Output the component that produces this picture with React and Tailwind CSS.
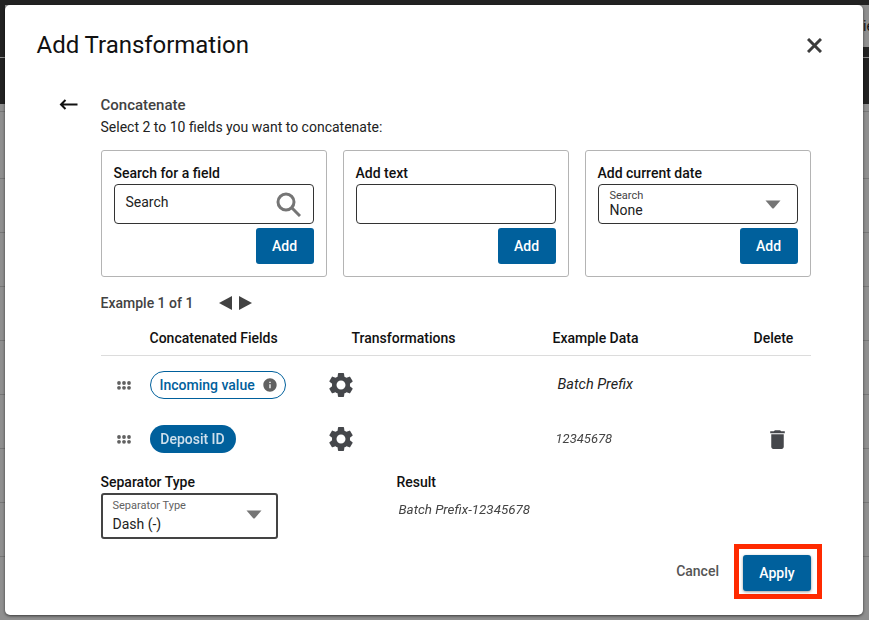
import React from "react";
import { MdSettings, MdDelete, MdInfo } from "react-icons/md";

function Caret() {
  return (
    <svg width="16" height="9" viewBox="0 0 16 9" className="shrink-0">
      <path d="M0.5 0.5 H15.5 L9 8 Q8 9 7 8 Z" fill="#757575" />
    </svg>
  );
}

function Dots() {
  return (
    <svg width="14" height="9" viewBox="0 0 14 9" className="shrink-0">
      {[2, 7, 12].map((x) =>
        [2, 6.8].map((y) => <circle key={`${x}-${y}`} cx={x} cy={y} r="1.9" fill="#616161" />)
      )}
    </svg>
  );
}

function AddButton() {
  return (
    <div className="flex justify-end mt-[4px]">
      <button className="w-[58px] h-[36px] rounded-[3px] bg-[#00609c] text-white text-[14px] font-medium">Add</button>
    </div>
  );
}

function Card({ title, children }) {
  return (
    <div className="w-[226px] h-[127px] rounded-[3px] border border-[#b4b4b4] px-[12px] pt-[14px]">
      <div className="text-[14px] leading-[17px] font-medium text-[#111] mb-[2px] whitespace-nowrap">{title}</div>
      {children}
      <AddButton />
    </div>
  );
}

function Backdrop() {
  const rows = [67, 54, 54, 54, 54, 54, 54, 54, 54];
  return (
    <div className="w-[869px] h-[620px] overflow-hidden bg-[#8f8f8f]">
      <div className="h-[5px] bg-[#222222]" />
      <div className="h-[42px] flex justify-between bg-[#8f8f8f]">
        <div className="w-[5px] bg-[#222222]" />
        <div className="w-[6px] overflow-hidden text-[14px] leading-[42px] text-[#111] font-['Roboto',sans-serif]">ie</div>
      </div>
      <div className="h-[10px] bg-[#222222]" />
      <div className="h-[1px] bg-[#8a8a8a]" />
      <div className="h-[46px] bg-[#222222]" />
      <div className="h-[7px] bg-[#8f8f8f]" />
      {rows.map((h, i) => (
        <div key={i} className="border-t border-[#777777] bg-[#8f8f8f]" style={{ height: h }} />
      ))}
    </div>
  );
}

export default function App() {
  return (
    <div className="relative w-[869px] h-[620px] overflow-hidden font-['Roboto',sans-serif]">
      <Backdrop />
      <div className="absolute left-[5px] top-[5px] w-[858px] h-[610px] rounded-[5px] bg-white shadow-[0_1px_3px_rgba(0,0,0,0.6)] flex flex-col">
        <div className="h-[80px] pl-[32px] pr-[41px] flex items-center justify-between shrink-0">
          <h1 className="text-[24px] leading-[32px] text-[#111] -ml-[0.5px] tracking-[-0.03px]">Add Transformation</h1>
          <svg width="15" height="15" viewBox="0 0 15 15">
            <path d="M1 1 L14 14 M14 1 L1 14" fill="none" stroke="#3c3c3c" strokeWidth="3" />
          </svg>
        </div>
        <div className="flex pl-[54px] shrink-0">
          <div className="w-[42px] pt-[14px]">
            <svg width="19" height="11" viewBox="0 0 19 11">
              <path d="M18.5 5.5 H2 M6.5 1 L2 5.5 L6.5 10" fill="none" stroke="#111" strokeWidth="2" />
            </svg>
          </div>
          <div className="w-[710px] pt-[10px] -ml-[0.5px]">
            <div className="text-[15px] leading-[20px] font-medium text-[#424242]">Concatenate</div>
            <div className="text-[14px] leading-[20px] mt-[2px] text-[#222]">Select 2 to 10 fields you want to concatenate:</div>
            <div className="flex gap-[16px] mt-[13px]">
              <Card title="Search for a field">
                <div className="h-[40px] rounded-[4px] border border-[#333] pl-[11px] pr-[12px] flex items-center justify-between">
                  <span className="text-[14px] text-[#222] -mt-[3px]">Search</span>
                  <svg width="25" height="25" viewBox="0 0 25 25" fill="none" stroke="#757575" strokeWidth="3">
                    <circle cx="10" cy="10" r="8" />
                    <path d="M15.5 15.5 L24 24" />
                  </svg>
                </div>
              </Card>
              <Card title="Add text">
                <div className="h-[40px] rounded-[4px] border border-[#333]" />
              </Card>
              <Card title="Add current date">
                <div className="h-[40px] rounded-[4px] border border-[#333] pl-[11px] pr-[16px] flex items-center justify-between">
                  <div className="-mt-[2px]">
                    <div className="text-[11px] leading-[13px] text-[#444]">Search</div>
                    <div className="text-[14px] leading-[16px] text-[#222]">None</div>
                  </div>
                  <Caret />
                </div>
              </Card>
            </div>
            <div className="flex items-center h-[20px] mt-[16px]">
              <span className="text-[14px] font-medium text-[#424242] w-[118px]">Example 1 of 1</span>
              <svg width="13" height="14" viewBox="0 0 13 14"><path d="M13 0 L0 7 L13 14 Z" fill="#424242" /></svg>
              <svg width="13" height="14" viewBox="0 0 13 14" className="ml-[7px]"><path d="M0 0 L13 7 L0 14 Z" fill="#424242" /></svg>
            </div>
            <div className="flex items-start h-[38px] mt-[5px] pt-[11px] border-b border-[#dcdcdc] text-[14px] leading-[18px] font-medium text-[#111]">
              <div className="w-[49px]" />
              <div className="w-[202px]">Concatenated Fields</div>
              <div className="w-[201px]">Transformations</div>
              <div className="w-[201px]">Example Data</div>
              <div>Delete</div>
            </div>
            <div className="flex items-center h-[54px] mt-[2px]">
              <div className="w-[49px] pl-[16px]"><Dots /></div>
              <div className="w-[179px]">
                <span className="inline-flex items-center h-[28px] w-[136px] pl-[9px] rounded-full border border-[#00609c] text-[14px] font-medium text-[#00609c] whitespace-nowrap">
                  Incoming value
                  <MdInfo size={16} className="ml-[7px] text-[#616161]" />
                </span>
              </div>
              <div className="w-[229px]"><MdSettings size={30} className="text-[#45474b] -ml-[3px]" /></div>
              <div className="text-[14.5px] italic text-[#222]">Batch Prefix</div>
            </div>
            <div className="flex items-center h-[54px]">
              <div className="w-[49px] pl-[16px]"><Dots /></div>
              <div className="w-[179px]">
                <span className="inline-flex items-center justify-center h-[28px] w-[86px] rounded-full bg-[#00609c] text-[14px] font-medium text-[#cfe0ec] blur-[0.3px]">Deposit ID</span>
              </div>
              <div className="w-[227px]"><MdSettings size={30} className="text-[#45474b] -ml-[3px]" /></div>
              <div className="w-[209px] text-[13px] italic text-[#444] blur-[0.3px]">12345678</div>
              <MdDelete size={25} className="text-[#45474b]" />
            </div>
            <div className="flex mt-[8px]">
              <div className="w-[296px]">
                <div className="text-[14px] leading-[17px] font-medium text-[#111]">Separator Type</div>
                <div className="w-[177px] h-[46px] mt-[2px] rounded-[3px] border-2 border-[#444] pl-[10px] pr-[14px] flex items-center justify-between">
                  <div>
                    <div className="text-[11px] leading-[12px] text-[#616161] mb-[4px]">Separator Type</div>
                    <div className="text-[14px] leading-[17px] text-[#222]">Dash (-)</div>
                  </div>
                  <div className="-mt-[4px]"><Caret /></div>
                </div>
              </div>
              <div>
                <div className="text-[14px] leading-[17px] font-medium text-[#111]">Result</div>
                <div className="text-[13.4px] leading-[16px] mt-[11px] ml-[2px] italic text-[#444] blur-[0.3px]">Batch Prefix-12345678</div>
              </div>
            </div>
          </div>
        </div>
        <div className="flex items-center justify-end mt-auto mb-[16px] pr-[41px]">
          <span className="text-[14px] font-medium text-[#555] mr-[15px]">Cancel</span>
          <div className="border-[5px] border-[#ff2a00] pl-[4px] pr-[6px] pt-[6px] pb-[3px]">
            <button className="block w-[68px] h-[36px] rounded-[3px] bg-[#00609c] text-white text-[14px] font-medium shadow-[0_1px_3px_rgba(0,0,0,0.4)]">Apply</button>
          </div>
        </div>
      </div>
    </div>
  );
}
